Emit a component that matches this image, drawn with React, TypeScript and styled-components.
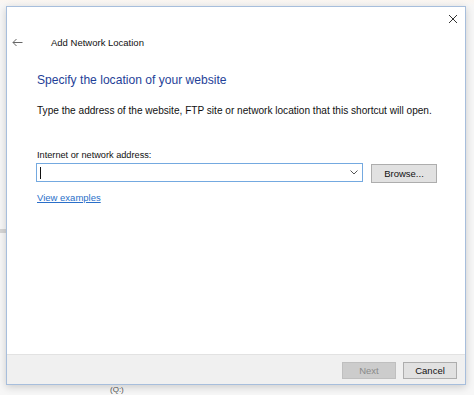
import React from "react";
import styled, { createGlobalStyle } from "styled-components";

const GlobalStyle = createGlobalStyle`
  html, body {
    margin: 0;
    padding: 0;
  }
  body {
    background: #f6f6f6;
    font-family: "Liberation Sans", "Open Sans", sans-serif;
  }
  #root {
    width: 474px;
    height: 395px;
    overflow: hidden;
  }
`;

const Desktop = styled.div`
  position: relative;
  width: 474px;
  height: 395px;
  padding: 6px 0 0 6px;
  box-sizing: border-box;
  background: linear-gradient(#fbf6f1 0, #f7f7f7 6px, #f7f7f7 100%);
`;

const Window = styled.div`
  position: relative;
  z-index: 1;
  width: 460px;
  height: 379px;
  box-sizing: border-box;
  display: flex;
  flex-direction: column;
  background: #fff;
  border: 1px solid #a7bedc;
  box-shadow: 0 2px 8px rgba(0, 0, 0, 0.18);
`;

const TitleBar = styled.div`
  height: 23px;
  display: flex;
  align-items: center;
  justify-content: flex-end;
  padding-right: 7px;
`;

const Header = styled.div`
  height: 24px;
  display: flex;
  align-items: center;
  padding-left: 4px;
`;

const BackArrow = styled.span`
  width: 12px;
  display: flex;
  align-items: center;
  justify-content: center;
  margin-right: 28px;
`;

const WindowTitle = styled.div`
  font-size: 9.5px;
  color: #111;
`;

const Body = styled.div`
  padding: 0 0 0 29px;
  display: flex;
  flex-direction: column;
`;

const Heading = styled.div`
  margin-top: 16px;
  line-height: 20px;
  height: 20px;
  font-size: 12.1px;
  color: #1f3f98;
  padding-left: 1px;
`;

const Text = styled.div<{ $top: number; $size?: number }>`
  margin-top: ${(p) => p.$top}px;
  line-height: 16px;
  height: 16px;
  font-size: ${(p) => p.$size ?? 9.5}px;
  color: #111;
  padding-left: 1px;
  white-space: nowrap;
`;

const InputRow = styled.div`
  display: flex;
  align-items: flex-start;
  gap: 8px;
  height: 20px;
`;

const AddressBox = styled.div`
  width: 327px;
  height: 19px;
  box-sizing: border-box;
  border: 1px solid #74a9e0;
  display: flex;
  align-items: center;
  justify-content: space-between;
  padding: 0 4px 0 3px;
`;

const Caret = styled.span`
  width: 1px;
  height: 12px;
  background: #111;
`;

const Button = styled.div<{ $disabled?: boolean; $w: number }>`
  width: ${(p) => p.$w}px;
  height: 17px;
  margin-top: 1px;
  box-sizing: border-box;
  background: ${(p) => (p.$disabled ? "#cccccc" : "#e1e1e1")};
  border: 1px solid ${(p) => (p.$disabled ? "#bfbfbf" : "#adadad")};
  color: ${(p) => (p.$disabled ? "#8a8a8a" : "#111")};
  font-size: 9.5px;
  display: flex;
  align-items: center;
  justify-content: center;
`;

const BrowseButton = styled(Button)`
  height: 19px;
`;

const Link = styled.a`
  margin-top: 7px;
  line-height: 16px;
  font-size: 9.5px;
  color: #2a6fc9;
  text-decoration: underline;
  padding-left: 1px;
  align-self: flex-start;
`;

const Footer = styled.div`
  margin-top: auto;
  height: 30px;
  box-sizing: border-box;
  background: #f0f0f0;
  border-top: 1px solid #e2e2e2;
  display: flex;
  align-items: center;
  justify-content: flex-end;
  gap: 7px;
  padding-right: 8px;
`;

const BehindText = styled.div`
  position: absolute;
  left: 110px;
  top: 385px;
  font-size: 8px;
  line-height: 9px;
  color: #555;
`;

const LeftStrip = styled.div`
  position: absolute;
  left: 0;
  top: 229px;
  width: 6px;
  height: 4px;
  background: #d6d6d6;
`;

export default function App() {
  return (
    <Desktop>
      <GlobalStyle />
      <LeftStrip />
      <BehindText>(Q:)</BehindText>
      <Window>
        <TitleBar>
          <svg width="10" height="10" viewBox="0 0 10 10">
            <path d="M1 1 L9 9 M9 1 L1 9" stroke="#333" strokeWidth="1" />
          </svg>
        </TitleBar>
        <Header>
          <BackArrow>
            <svg width="11" height="9" viewBox="0 0 11 9">
              <path d="M10.5 4.5 H1 M4.5 1 L1 4.5 L4.5 8" stroke="#666" strokeWidth="1" fill="none" />
            </svg>
          </BackArrow>
          <WindowTitle>Add Network Location</WindowTitle>
        </Header>
        <Body>
          <Heading>Specify the location of your website</Heading>
          <Text $top={13} $size={10.1}>
            Type the address of the website, FTP site or network location that this shortcut will open.
          </Text>
          <Text $top={28} $size={9.2}>
            Internet or network address:
          </Text>
          <InputRow>
            <AddressBox>
              <Caret />
              <svg width="8" height="5" viewBox="0 0 8 5">
                <path d="M0.5 0.5 L4 4 L7.5 0.5" stroke="#555" strokeWidth="1" fill="none" />
              </svg>
            </AddressBox>
            <BrowseButton $w={66}>Browse...</BrowseButton>
          </InputRow>
          <Link>View examples</Link>
        </Body>
        <Footer>
          <Button $w={54} $disabled>
            Next
          </Button>
          <Button $w={54}>Cancel</Button>
        </Footer>
      </Window>
    </Desktop>
  );
}
